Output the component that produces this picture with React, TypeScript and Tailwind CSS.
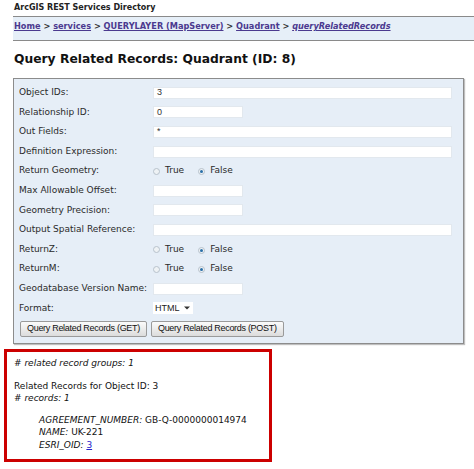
import React from "react";

const font = { fontFamily: '"DejaVu Sans", Verdana, sans-serif' };

function Radio({ checked }: { checked?: boolean }) {
  return (
    <span className="inline-flex items-center justify-center w-[7px] h-[7px] rounded-full border border-[#b8c2cc] bg-[#eef2f5]">
      {checked ? <span className="w-[3px] h-[3px] rounded-full bg-[#2a6fa8]" /> : null}
    </span>
  );
}

function Row({ label, children }: { label: string; children?: React.ReactNode }) {
  return (
    <div className="flex items-center h-[19.6px]">
      <div className="w-[134px] shrink-0 text-[9px] text-[#2a2a2a]">{label}</div>
      <div className="flex items-center">{children}</div>
    </div>
  );
}

function Input({ value = "", wide }: { value?: string; wide?: boolean }) {
  return (
    <div
      className={`${wide ? "w-[299px]" : "w-[90px]"} h-[12px] bg-white border border-[#e2e8ee] flex items-center px-[3px] text-[9px] text-[#333] leading-none`}
      style={{ fontFamily: '"Liberation Sans", Arial, sans-serif' }}
    >
      {value}
    </div>
  );
}

function TrueFalse() {
  return (
    <div className="flex items-center text-[9px] text-[#2a2a2a]">
      <Radio />
      <span className="ml-[5px]">True</span>
      <span className="ml-[14px]"><Radio checked /></span>
      <span className="ml-[5px]">False</span>
    </div>
  );
}

function Btn({ children }: { children: React.ReactNode }) {
  return (
    <div
      className="h-[16px] px-[6px] flex items-center border border-[#9a9a9a] rounded-[2px] bg-gradient-to-b from-[#fbfbfb] to-[#dcdcdc] text-[9px] text-[#111] tracking-[-0.3px]"
      style={{ fontFamily: '"Liberation Sans", Arial, sans-serif' }}
    >
      {children}
    </div>
  );
}

export default function App() {
  return (
    <div className="w-[474px] h-[469px] bg-white overflow-hidden text-black" style={font}>
      <div className="h-[16px] pl-[14px] pt-[2px] text-[8px] font-bold text-[#222] leading-[12px]">
        ArcGIS REST Services Directory
      </div>
      <div className="ml-[13px] h-[25px] border-y border-[#8a8a8a] bg-[#e6eff8] pl-[1px] pt-[3px] text-[8.2px] font-bold leading-[12px] text-[#333]">
        <a className="underline text-[#4b3a8f]">Home</a> &gt;{" "}
        <a className="underline text-[#4b3a8f]">services</a> &gt;{" "}
        <a className="underline text-[#4b3a8f]">QUERYLAYER (MapServer)</a> &gt;{" "}
        <a className="underline text-[#4b3a8f]">Quadrant</a> &gt;{" "}
        <a className="underline italic text-[#4b3a8f]">queryRelatedRecords</a>
      </div>
      <div className="h-[37px] pl-[14px] flex items-center text-[12.3px] font-bold text-[#111]">
        Query Related Records: Quadrant (ID: 8)
      </div>
      <div className="ml-[13px] w-[451px] h-[266px] border border-[#8c8c8c] bg-[#e6eef7] shadow-[1px_1px_1px_rgba(0,0,0,0.25)] pl-[5px] pt-[4px]">
        <Row label="Object IDs:"><Input value="3" wide /></Row>
        <Row label="Relationship ID:"><Input value="0" /></Row>
        <Row label="Out Fields:"><Input value="*" wide /></Row>
        <Row label="Definition Expression:"><Input wide /></Row>
        <Row label="Return Geometry:"><TrueFalse /></Row>
        <Row label="Max Allowable Offset:"><Input /></Row>
        <Row label="Geometry Precision:"><Input /></Row>
        <Row label="Output Spatial Reference:"><Input wide /></Row>
        <Row label="ReturnZ:"><TrueFalse /></Row>
        <Row label="ReturnM:"><TrueFalse /></Row>
        <Row label="Geodatabase Version Name:"><Input /></Row>
        <Row label="Format:">
          <div
            className="w-[40px] h-[12px] bg-white flex items-center justify-between px-[2px] text-[9px] text-[#222]"
            style={{ fontFamily: '"Liberation Sans", Arial, sans-serif' }}
          >
            <span>HTML</span>
            <svg width="6" height="4" viewBox="0 0 6 4" className="mr-[1px]">
              <path d="M0 0.5 L6 0.5 L3 3.5 Z" fill="#333" />
            </svg>
          </div>
        </Row>
        <div className="flex items-center gap-[4px] mt-[3px] ml-[1px]">
          <Btn>Query Related Records (GET)</Btn>
          <Btn>Query Related Records (POST)</Btn>
        </div>
      </div>
      <div className="ml-[4px] mt-[5px] w-[268px] h-[113px] border-[3px] border-[#cc0000] pl-[7px] pt-[5px] text-[9px] leading-[12.5px] text-[#111]">
        <div className="italic">#&nbsp;related record groups: 1</div>
        <div className="mt-[10px]">Related Records for Object ID: 3</div>
        <div className="italic">#&nbsp;records: 1</div>
        <div className="mt-[9px] pl-[25px]">
          <div><i>AGREEMENT_NUMBER:</i> GB-Q-0000000014974</div>
          <div><i>NAME:</i> UK-221</div>
          <div><i>ESRI_OID:</i> <a className="underline text-[#2323cc]">3</a></div>
        </div>
      </div>
    </div>
  );
}
